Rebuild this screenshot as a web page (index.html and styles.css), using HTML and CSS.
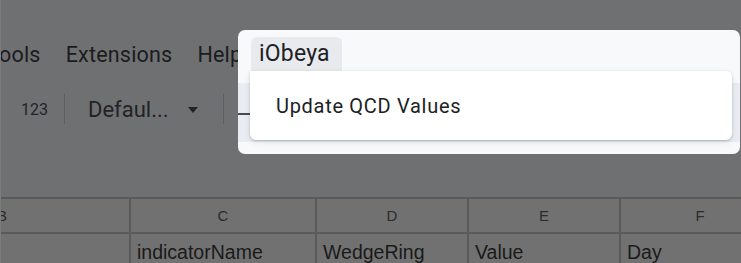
FILE: index.html
```html
<!DOCTYPE html>
<html>
<head>
<meta charset="utf-8">
<link rel="stylesheet" href="styles.css">
</head>
<body>
<div class="page">
  <div class="menubar">
    <span class="mi tools">Tools</span>
    <span class="mi">Extensions</span>
    <span class="mi">Help</span>
  </div>
  <div class="toolbar">
    <span class="num">123</span>
    <span class="div"></span>
    <span class="font">Defaul...</span>
    <span class="caret"></span>
    <span class="div div2"></span>
  </div>
  <div class="grid">
    <div class="row head">
      <div class="cell cb">B</div>
      <div class="cell cc">C</div>
      <div class="cell cd">D</div>
      <div class="cell ce">E</div>
      <div class="cell cf">F</div>
    </div>
    <div class="row data">
      <div class="cell cb"></div>
      <div class="cell cc">indicatorName</div>
      <div class="cell cd">WedgeRing</div>
      <div class="cell ce">Value</div>
      <div class="cell cf">Day</div>
    </div>
  </div>

  <div class="spot">
    <div class="band"></div>
    <div class="dash"></div>
    <div class="tab">iObeya</div>
    <div class="card"><span class="item">Update QCD Values</span></div>
  </div>
</div>
</body>
</html>
```

FILE: styles.css
```css
html, body { margin: 0; padding: 0; }
body { width: 741px; height: 263px; overflow: hidden; background: #6f7072; font-family: Roboto, "Liberation Sans", sans-serif; }
.page { position: relative; width: 741px; height: 263px; border-left: 1px solid #7b7c7e; box-sizing: border-box; overflow: hidden; }
.menubar { height: 85px; display: flex; align-items: flex-start; padding-top: 42px; box-sizing: border-box; color: #1b1c1e; font-size: 21.5px; letter-spacing: 0.2px; }
.mi { margin-right: 25px; }
.tools { margin-left: -14px; }
.toolbar { height: 48px; display: flex; align-items: center; color: #222326; }
.num { font-size: 16px; margin-left: 20px; }
.div { width: 1px; height: 30px; background: #5d5e61; margin-left: 16px; }
.font { font-size: 22px; margin-left: 23px; }
.caret { width: 0; height: 0; border-left: 5px solid transparent; border-right: 5px solid transparent; border-top: 6px solid #222326; margin-left: 19px; margin-top: 2px; }
.div2 { margin-left: 25px; }
.grid { margin-top: 64px; background: #717171; font-family: "Liberation Sans", Arial, sans-serif; }
.row { display: flex; border-top: 2px solid #5a5a5a; }
.head { height: 33px; align-items: center; color: #2b2b2b; font-size: 15px; }
.head .cell { text-align: center; }
.data { height: 40px; color: #1a1a1a; font-size: 19.5px; }
.data .cell { padding: 7px 0 0 6px; box-sizing: border-box; }
.cell { height: 100%; line-height: 33px; box-sizing: border-box; border-right: 2px solid #5a5a5a; flex: none; }
.data .cell { line-height: 22px; }
.cb { margin-left: -126px; width: 256px; }
.cc { width: 186px; }
.cd { width: 152px; }
.ce { width: 152px; }
.cf { width: 160px; }
.spot { position: absolute; left: 237px; top: 30px; width: 502px; height: 124px; border-radius: 7px; background: #f8f9fb; overflow: hidden; }
.band { position: absolute; left: 0; right: 0; top: 53px; height: 59px; background: #e9edf3; }
.dash { position: absolute; left: 0; top: 83px; width: 12px; height: 2px; background: #4a4b4e; }
.tab { position: absolute; left: 13px; top: 7px; width: 91px; height: 34px; box-sizing: border-box; padding-left: 8px; background: #e8eaed; border-radius: 6px 6px 0 0; font-size: 23px; letter-spacing: 0.2px; line-height: 34px; color: #202124; }
.card { position: absolute; left: 12px; top: 41px; width: 482px; height: 69px; background: #fff; border-radius: 0 6px 6px 6px; box-shadow: 0 1px 2px rgba(60,64,67,.25), 0 2px 6px rgba(60,64,67,.12); display: flex; align-items: center; }
.item { margin-left: 26px; font-size: 20px; letter-spacing: 0.7px; color: #202124; margin-top: 1px; }
```
